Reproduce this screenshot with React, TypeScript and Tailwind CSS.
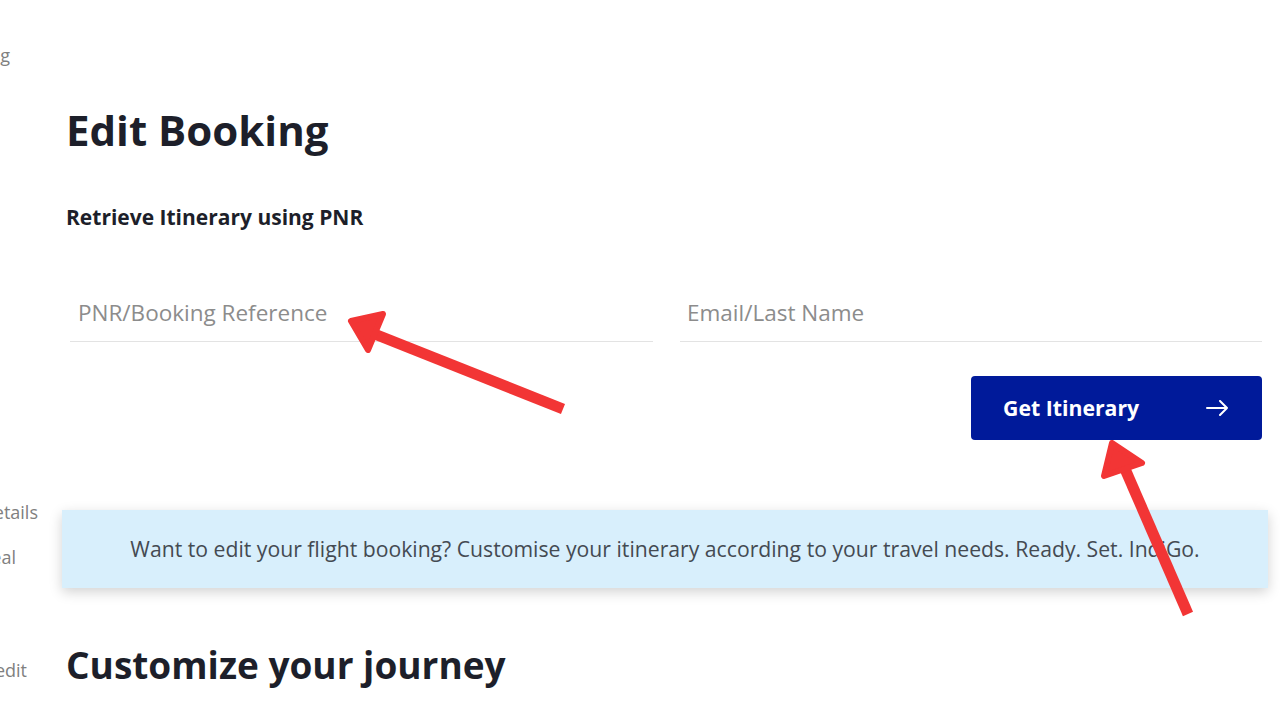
import React from "react";

function ArrowOverlay() {
  return (
    <svg className="pointer-events-none absolute left-0 top-0" width="1280" height="720" viewBox="0 0 1280 720">
      <g fill="#f23535" stroke="#f23535" strokeLinejoin="round" strokeLinecap="butt">
        <line x1="563" y1="409" x2="372" y2="333" strokeWidth="11" />
        <polygon points="351,321 383,314 368,350" strokeWidth="6" />
        <line x1="1188" y1="614" x2="1122" y2="462" strokeWidth="11" />
        <polygon points="1112,443 1142,463 1104,476" strokeWidth="6" />
      </g>
    </svg>
  );
}

export default function App() {
  const font = { fontFamily: '"Open Sans", "Noto Sans", sans-serif' };
  return (
    <div className="relative h-[720px] w-[1280px] overflow-hidden bg-white" style={font}>
      <div className="flex h-full">
        <div className="w-[40px] shrink-0 overflow-hidden text-[18px] text-[#808080]">
          <div className="mt-[42px] flex justify-end whitespace-nowrap pr-[30px]">Edit Booking</div>
          <div className="mt-[430px] flex justify-end whitespace-nowrap pr-[2px]">Contact Details</div>
          <div className="mt-[18px] flex justify-end whitespace-nowrap pr-[24px]">Special Meal</div>
          <div className="mt-[86px] flex justify-end whitespace-nowrap pr-[13px]">Fare Credit</div>
        </div>
        <div className="ml-[26px] w-[1200px]">
          <h1 className="mt-[105px] text-[42px] font-bold leading-[50px] text-[#1d1f2a]">Edit Booking</h1>
          <h2 className="mt-[49px] text-[21px] font-bold leading-[26px] text-[#1d1f2a]">Retrieve Itinerary using PNR</h2>
          <div className="mt-[57px] flex gap-[27px] pl-[4px] pr-[4px]">
            <div className="flex h-[55px] flex-1 items-center border-b border-[#e3e3e3] pb-[2px] pl-[8px] text-[22.5px] text-[#8c8c8c]">
              PNR/Booking Reference
            </div>
            <div className="flex h-[55px] flex-1 items-center border-b border-[#e3e3e3] pb-[2px] pl-[7px] text-[22.5px] text-[#8c8c8c]">
              Email/Last Name
            </div>
          </div>
          <div className="mt-[34px] flex justify-end pr-[4px]">
            <button className="flex h-[64px] w-[291px] items-center justify-between rounded-[4px] bg-[#001a9a] pl-[32px] pr-[34px] text-[21.25px] font-bold text-white">
              <span>Get Itinerary</span>
              <svg width="22" height="16" viewBox="0 0 22 16" fill="none" stroke="white" strokeWidth="2" strokeLinecap="round" strokeLinejoin="round">
                <path d="M1 8h20M14 1l7 7-7 7" />
              </svg>
            </button>
          </div>
          <div className="ml-[-4px] mr-[-2px] mt-[70px] flex h-[78px] items-center justify-center bg-[#d8effc] text-[21.2px] text-[#444a52] shadow-[0_4px_12px_rgba(0,0,0,0.18)]">
            Want to edit your flight booking? Customise your itinerary according to your travel needs. Ready. Set. IndiGo.
          </div>
          <h2 className="mt-[55px] text-[37px] font-bold leading-[44px] text-[#1d1f2a]">Customize your journey</h2>
        </div>
      </div>
      <ArrowOverlay />
    </div>
  );
}
